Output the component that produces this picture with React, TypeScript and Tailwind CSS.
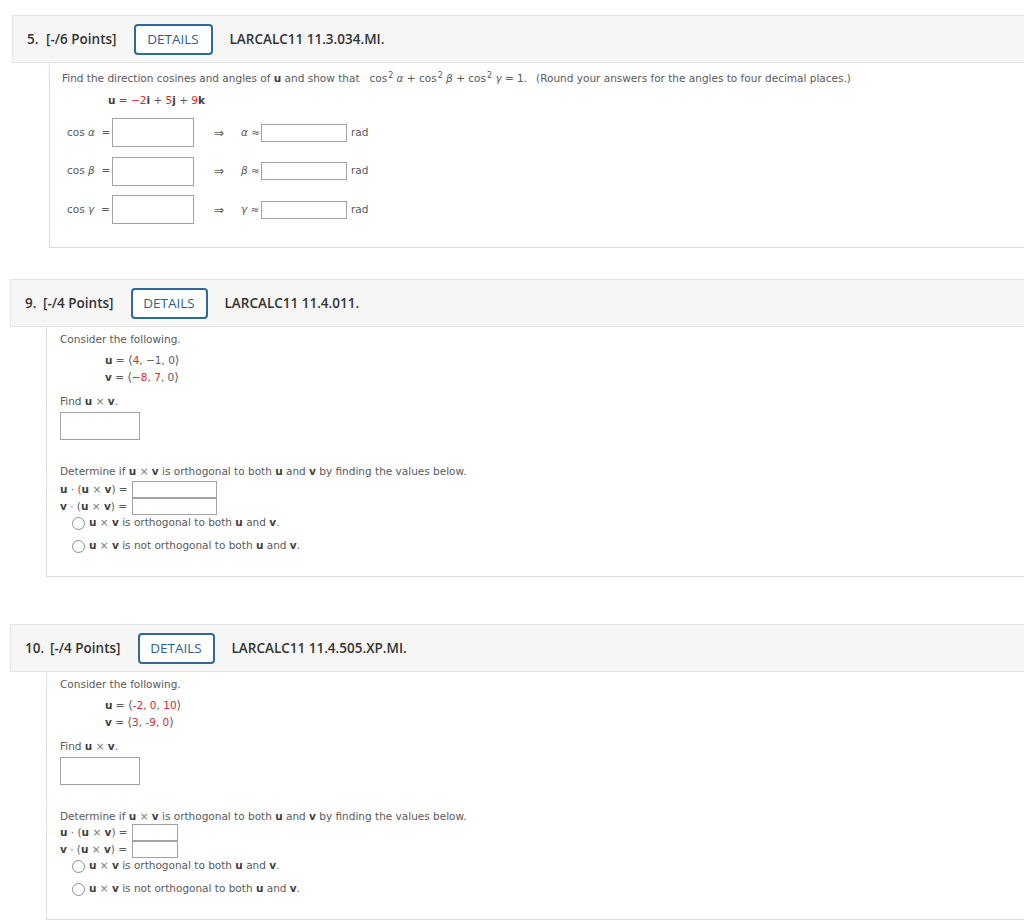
import React from 'react';

const RED = 'text-[#e3262d]';

const B: React.FC<{ children: React.ReactNode }> = ({ children }) => (
  <b className="font-bold text-[#3f3f3f]">{children}</b>
);

const Cross = () => (
  <>
    <B>u</B> <span className="text-[#777]">×</span> <B>v</B>
  </>
);

const Box: React.FC<{ className: string }> = ({ className }) => (
  <div className={`shrink-0 bg-white border border-[#a3a3a3] ${className}`} />
);

const Radio: React.FC<{ children: React.ReactNode }> = ({ children }) => (
  <div className="flex items-center h-[16px] pl-[12px]">
    <span className="inline-block w-[13px] h-[13px] rounded-full border border-[#8f8f8f] bg-white mr-[4px]" />
    <span>{children}</span>
  </div>
);

const Sq = () => <sup className="text-[8px] ml-[1px]">2</sup>;

interface HeaderProps {
  num: string;
  points: string;
  code: string;
  left: string;
  numW: string;
  btnW: string;
}

const Header: React.FC<HeaderProps> = ({ num, points, code, left, numW, btnW }) => (
  <div
    className={`${left} h-[48px] flex items-center bg-[#f6f6f6] border border-[#e4e4e4] pl-[14px] text-[#333] font-['Open_Sans',sans-serif] font-semibold text-[13.5px]`}
  >
    <span className={numW}>{num}</span>
    <span>{points}</span>
    <span
      className={`ml-[17px] ${btnW} h-[31px] flex items-center justify-center border-2 border-[#31699a] rounded-[4px] bg-white text-[#2c5f8f] font-normal`}
    >
      DETAILS
    </span>
    <span className="ml-[17px]">{code}</span>
  </div>
);

const Card1 = () => (
  <div>
    <Header
      num="5."
      points="[-/6 Points]"
      code="LARCALC11 11.3.034.MI."
      left="ml-[12px]"
      numW="w-[19px]"
      btnW="w-[79px]"
    />
    <div className="ml-[49px] border-l border-b border-[#dcdcdc] pl-[12px] pt-[7px] pb-[23px]">
      <div className="h-[16px] leading-[16px] whitespace-nowrap">
        Find the direction cosines and angles of <B>u</B> and show that
        <span className="ml-[10px]">
          cos<Sq /> <i>α</i> + cos<Sq /> <i>β</i> + cos<Sq /> <i>γ</i> = 1.
        </span>
        <span className="ml-[9px]">(Round your answers for the angles to four decimal places.)</span>
      </div>
      <div className="mt-[6px] ml-[46px] h-[16px] leading-[16px]">
        <B>u</B> = <span className={RED}>−2</span><B>i</B> + <span className={RED}>5</span><B>j</B> +{' '}
        <span className={RED}>9</span><B>k</B>
      </div>
      <div className="mt-[10px] flex flex-col gap-[9.5px]">
        {['α', 'β', 'γ'].map((g) => (
          <div key={g} className="flex items-center h-[29px] whitespace-nowrap">
            <span className="w-[50px] pl-[5px]">
              cos <i>{g}</i> &nbsp;=
            </span>
            <Box className="w-[82px] h-[29px]" />
            <span className="ml-[20px] w-[27px] text-[12px]">⇒</span>
            <span className="w-[20px]">
              <i>{g}</i> ≈
            </span>
            <Box className="w-[86px] h-[18px]" />
            <span className="ml-[4px]">rad</span>
          </div>
        ))}
      </div>
    </div>
  </div>
);

interface CrossCardProps {
  num: string;
  code: string;
  numW: string;
  u: React.ReactNode;
  v: React.ReactNode;
  dotW: string;
  dotTop: string;
  top: string;
}

const CrossCard: React.FC<CrossCardProps> = ({ num, code, numW, u, v, dotW, dotTop, top }) => (
  <div className={top}>
    <Header num={num} points="[-/4 Points]" code={code} left="ml-[10px]" numW={numW} btnW="w-[77px]" />
    <div className="ml-[46px] border-l border-b border-[#dcdcdc] pl-[13px] pt-[4px] pb-[22px]">
      <div className="h-[16px] leading-[16px]">Consider the following.</div>
      <div className="mt-[5px] ml-[45px] leading-[17px]">
        <div>
          <B>u</B> = <span className="text-[12px]">⟨</span>
          {u}
          <span className="text-[12px]">⟩</span>
        </div>
        <div>
          <B>v</B> = <span className="text-[12px]">⟨</span>
          {v}
          <span className="text-[12px]">⟩</span>
        </div>
      </div>
      <div className="mt-[7px] h-[16px] leading-[16px]">
        Find <Cross />.
      </div>
      <Box className="mt-[3px] w-[80px] h-[28px]" />
      <div className="mt-[23px] h-[16px] leading-[16px]">
        Determine if <Cross /> is orthogonal to both <B>u</B> and <B>v</B> by finding the values below.
      </div>
      <div className={`${dotTop} flex items-center h-[17px] whitespace-nowrap`}>
        <span className="w-[72px]">
          <B>u</B> · (<Cross />) =
        </span>
        <Box className={`${dotW} h-[17px]`} />
      </div>
      <div className="flex items-center h-[17px] whitespace-nowrap">
        <span className="w-[72px]">
          <B>v</B> · (<Cross />) =
        </span>
        <Box className={`${dotW} h-[17px]`} />
      </div>
      <div>
        <Radio>
          <Cross /> is orthogonal to both <B>u</B> and <B>v</B>.
        </Radio>
        <div className="mt-[7px]">
          <Radio>
            <Cross /> is not orthogonal to both <B>u</B> and <B>v</B>.
          </Radio>
        </div>
      </div>
    </div>
  </div>
);

export default function App() {
  return (
    <div className="w-[1024px] h-[924px] overflow-hidden bg-white">
      <div className="w-[1040px] pt-[15px] font-['DejaVu_Sans',Verdana,sans-serif] text-[10.5px] text-[#5a5a5a]">
        <Card1 />
        <CrossCard
          top="mt-[31px]"
          num="9."
          numW="w-[18px]"
          code="LARCALC11 11.4.011."
          dotW="w-[85px]"
          dotTop="mt-[2px]"
          u={
            <>
              <span className={RED}>4</span>, −1, 0
            </>
          }
          v={
            <>
              <span className={RED}>−8</span>, <span className={RED}>7</span>, 0
            </>
          }
        />
        <CrossCard
          top="mt-[47px]"
          num="10."
          numW="w-[25px]"
          code="LARCALC11 11.4.505.XP.MI."
          dotW="w-[46px]"
          dotTop="mt-0"
          u={
            <>
              <span className={RED}>-2</span>, <span className={RED}>0</span>, <span className={RED}>10</span>
            </>
          }
          v={
            <>
              <span className={RED}>3</span>, <span className={RED}>-9</span>, <span className={RED}>0</span>
            </>
          }
        />
      </div>
    </div>
  );
}
